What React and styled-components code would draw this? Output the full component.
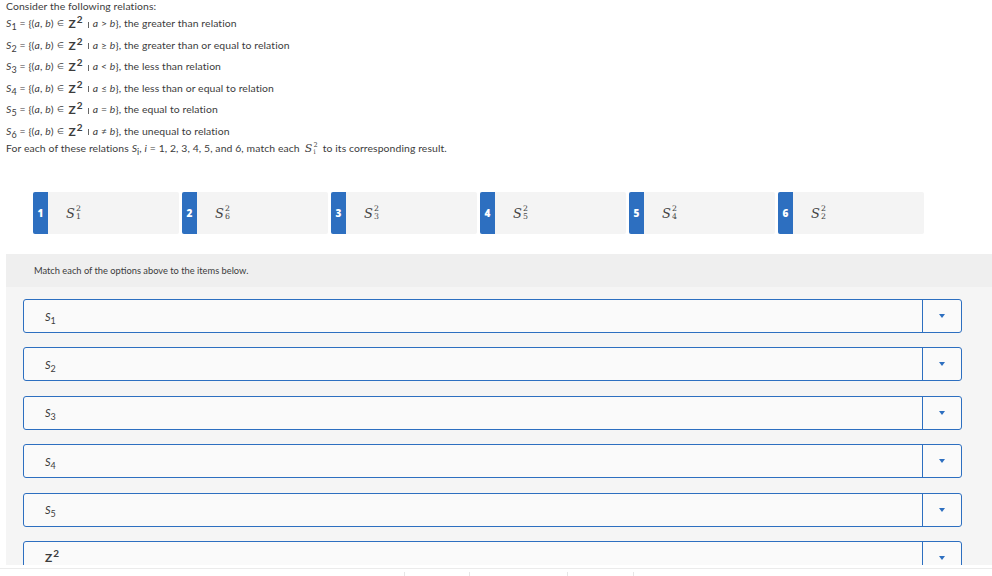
import React from 'react';
import styled, { createGlobalStyle } from 'styled-components';

const RELATIONS = [
  { n: 1, op: '>', label: 'the greater than relation' },
  { n: 2, op: '≥', label: 'the greater than or equal to relation' },
  { n: 3, op: '<', label: 'the less than relation' },
  { n: 4, op: '≤', label: 'the less than or equal to relation' },
  { n: 5, op: '=', label: 'the equal to relation' },
  { n: 6, op: '≠', label: 'the unequal to relation' }
];

// options shown in the draggable strip, in their shuffled order
const OPTIONS = ['1', '6', '3', '5', '4', '2'];

const TARGETS = [
  { sub: '1' },
  { sub: '2' },
  { sub: '3' },
  { sub: '4' },
  { sub: '5' },
  { zed: true }
];

const GlobalStyle = createGlobalStyle`
  html, body {
    margin: 0;
    padding: 0;
    background: #fff;
  }
  body {
    font-family: "Lato", "Open Sans", "Liberation Sans", sans-serif;
    color: #3c3c3c;
    overflow: hidden;
  }
`;

const Page = styled.div`
  width: 992px;
  height: 576px;
  overflow: hidden;
  display: flex;
  flex-direction: column;
`;

const Prompt = styled.div`
  padding-left: 6px;
  font-size: 10.4px;
  letter-spacing: 0.1px;
`;

const Line = styled.div`
  height: ${({ $tall }) => ($tall ? '21.5px' : '13px')};
  line-height: ${({ $tall }) => ($tall ? '21.5px' : '13px')};
  white-space: nowrap;
  display: flex;
  align-items: center;
`;

const Sym = styled.span`
  font-style: italic;
`;

const Sub = styled.sub`
  font-size: 9px;
  vertical-align: -3px;
  font-style: normal;
  line-height: 0;
`;

const Elem = styled.span`
  font-size: 8px;
  margin: 0 1px;
`;

const Zed = styled.span`
  font-weight: 700;
  font-size: 12px;
  margin: 0 1px 0 3px;
  sup {
    font-size: 10px;
    vertical-align: 5px;
    line-height: 0;
    margin-left: 1px;
  }
`;

const Bar = styled.span`
  display: inline-block;
  width: 1px;
  height: 6px;
  background: #666;
  margin: 2px 4px 0 4px;
`;

const MathTerm = styled.span`
  display: inline-flex;
  align-items: center;
  font-family: "DejaVu Serif", "Liberation Serif", serif;
  font-style: italic;
  font-size: ${({ $size }) => $size || 13}px;
  color: #444;
  margin: 0 ${({ $gap }) => $gap ?? 0}px;
`;

const Scripts = styled.span`
  display: inline-flex;
  flex-direction: column;
  font-style: normal;
  font-size: 0.6em;
  line-height: 1;
  margin-left: 1px;
`;

const Cards = styled.div`
  display: flex;
  gap: 3px;
  margin: 37px 0 0 33px;
`;

const Card = styled.div`
  width: 146px;
  height: 42px;
  background: #f4f4f4;
  border-radius: 2px;
  display: flex;
  align-items: center;
  overflow: hidden;
`;

const Badge = styled.div`
  width: 15px;
  align-self: stretch;
  background: #2d6fc0;
  color: #fff;
  font-family: "Open Sans", "Liberation Sans", sans-serif;
  font-weight: 800;
  font-size: 10px;
  display: flex;
  align-items: center;
  justify-content: center;
  margin-right: 18px;
`;

const Panel = styled.div`
  margin: 20px 0 0 6px;
  height: 311px;
  overflow: hidden;
  background: #f5f5f5;
  flex-shrink: 0;
`;

const PanelHead = styled.div`
  height: 33px;
  background: #efefef;
  display: flex;
  align-items: center;
  padding-left: 28px;
  font-size: 9.3px;
`;

const Rows = styled.div`
  display: flex;
  flex-direction: column;
  gap: 14.4px;
  padding: 12px 0 0 17px;
`;

const Dropdown = styled.div`
  width: 937px;
  height: 32px;
  border: 1px solid #2d6fc0;
  border-radius: 3px;
  background: #fafafa;
  display: flex;
  flex-shrink: 0;
`;

const DropLabel = styled.div`
  flex: 1;
  display: flex;
  align-items: center;
  padding-left: 21px;
  font-size: 11px;
`;

const DropToggle = styled.div`
  width: 38px;
  border-left: 1px solid #2d6fc0;
  display: flex;
  align-items: center;
  justify-content: center;
`;

const Caret = styled.span`
  width: 0;
  height: 0;
  border-left: 3.5px solid transparent;
  border-right: 3.5px solid transparent;
  border-top: 4px solid #2d6fc0;
`;

const Footer = styled.div`
  margin-top: 3px;
  border-top: 1px solid #ebebeb;
  flex: 1;
  display: flex;
  padding-top: 3px;
`;

const Divider = styled.span`
  width: 1px;
  height: 8px;
  background: #e6e6e6;
  margin-left: ${({ $at }) => $at}px;
`;

function Relation({ n, op, label }) {
  return (
    <Line $tall>
      <Sym>S<Sub>{n}</Sub></Sym>
      &nbsp;= {'{'}(<Sym>a</Sym>,&nbsp;<Sym>b</Sym>)&nbsp;<Elem>∈</Elem>
      <Zed>Z<sup>2</sup></Zed>
      <Bar />
      <Sym>a</Sym>&nbsp;{op}&nbsp;<Sym>b</Sym>{'}'}, {label}
    </Line>
  );
}

function SquareTerm({ sub, size, gap }) {
  return (
    <MathTerm $size={size} $gap={gap}>
      S
      <Scripts>
        <span>2</span>
        <span>{sub}</span>
      </Scripts>
    </MathTerm>
  );
}

export default function App() {
  return (
    <Page>
      <GlobalStyle />
      <Prompt>
        <Line>Consider the following relations:</Line>
        {RELATIONS.map(r => <Relation key={r.n} {...r} />)}
        <Line>
          For each of these relations&nbsp;<Sym>S<Sub>i</Sub></Sym>,&nbsp;<Sym>i</Sym>&nbsp;= 1, 2, 3, 4, 5, and 6, match each
          <SquareTerm sub="i" size={11} gap={5} /> to its corresponding result.
        </Line>
      </Prompt>

      <Cards>
        {OPTIONS.map((sub, i) => (
          <Card key={i}>
            <Badge>{i + 1}</Badge>
            <SquareTerm sub={sub} />
          </Card>
        ))}
      </Cards>

      <Panel>
        <PanelHead>Match each of the options above to the items below.</PanelHead>
        <Rows>
          {TARGETS.map((t, i) => (
            <Dropdown key={i}>
              <DropLabel>
                {t.zed
                  ? <Zed style={{ marginLeft: 0 }}>Z<sup>2</sup></Zed>
                  : <Sym>S<Sub>{t.sub}</Sub></Sym>}
              </DropLabel>
              <DropToggle><Caret /></DropToggle>
            </Dropdown>
          ))}
        </Rows>
      </Panel>

      <Footer>
        <Divider $at={404} />
        <Divider $at={64} />
        <Divider $at={97} />
        <Divider $at={65} />
      </Footer>
    </Page>
  );
}
